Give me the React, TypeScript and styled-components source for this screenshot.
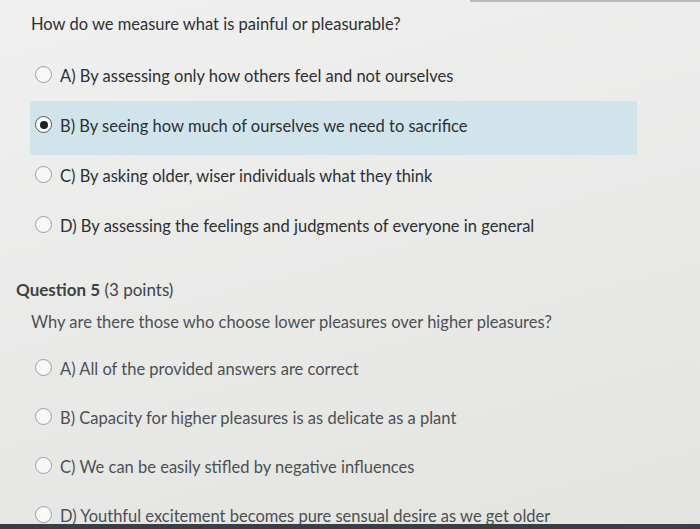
import styled, { createGlobalStyle } from "styled-components";

const colors = {
  bg: "#eaebe9",
  text: "#2c2f33",
  muted: "#4c5053",
  ring: "#9b9ea0",
  highlight: "#d2e4eb",
  bar: "#3b3e44",
};

const GlobalStyle = createGlobalStyle`
  html, body {
    margin: 0;
    padding: 0;
  }
  body {
    font-family: Lato, "Open Sans", "Liberation Sans", sans-serif;
    background: ${colors.bg};
  }
`;

const Page = styled.div`
  width: 700px;
  height: 529px;
  display: flex;
  flex-direction: column;
  overflow: hidden;
  background: linear-gradient(165deg, #eff0ef 0%, #e9eae8 55%, #e3e4df 100%);
`;

const Content = styled.div`
  flex: 1;
  overflow: hidden;
  border-top: 2px solid transparent;
`;

const TopEdge = styled.div`
  height: 2px;
  margin-left: 470px;
  background: #b9bbbc;
`;

const Section = styled.section<{ $tone?: string }>`
  color: ${(p) => p.$tone || colors.text};
`;

const Prompt = styled.p<{ $top?: number }>`
  margin: ${(p) => p.$top ?? 10}px 0 0 31px;
  font-size: 16.5px;
  line-height: 20px;
`;

const Heading = styled.h3`
  margin: 29px 0 0 16px;
  font-size: 17px;
  line-height: 20px;
  font-weight: 400;
  color: #3e4245;

  strong {
    font-weight: 700;
  }
`;

const OptionList = styled.div<{ $top: number }>`
  margin-top: ${(p) => p.$top}px;
  display: flex;
  flex-direction: column;
`;

const Option = styled.label<{ $selected?: boolean; $row?: number }>`
  display: flex;
  align-items: center;
  gap: 8px;
  height: ${(p) => (p.$row ?? 50) + (p.$selected ? 4 : 0)}px;
  margin-bottom: ${(p) => (p.$selected ? -4 : 0)}px;
  padding-bottom: ${(p) => (p.$selected ? 4 : 0)}px;
  width: 607px;
  margin-left: 30px;
  padding-left: 5px;
  box-sizing: border-box;
  font-size: 16.5px;
  background: ${(p) => (p.$selected ? colors.highlight : "transparent")};
`;

const Radio = styled.span<{ $checked?: boolean }>`
  width: 17px;
  height: 17px;
  margin-top: -3px;
  box-sizing: border-box;
  border-radius: 50%;
  border: 1.5px solid ${(p) => (p.$checked ? "#55595c" : colors.ring)};
  background: #f7f8f7;
  display: flex;
  align-items: center;
  justify-content: center;
  flex-shrink: 0;

  &::after {
    content: "";
    width: 8px;
    height: 8px;
    border-radius: 50%;
    background: #1f2124;
    display: ${(p) => (p.$checked ? "block" : "none")};
  }
`;

const BottomBar = styled.div`
  height: 5px;
  background: ${colors.bar};
`;

const first = [
  "A) By assessing only how others feel and not ourselves",
  "B) By seeing how much of ourselves we need to sacrifice",
  "C) By asking older, wiser individuals what they think",
  "D) By assessing the feelings and judgments of everyone in general",
];

const second = [
  "A) All of the provided answers are correct",
  "B) Capacity for higher pleasures is as delicate as a plant",
  "C) We can be easily stifled by negative influences",
  "D) Youthful excitement becomes pure sensual desire as we get older",
];

export default function App() {
  return (
    <>
      <GlobalStyle />
      <Page>
        <TopEdge />
        <Content>
          <Section>
            <Prompt>How do we measure what is painful or pleasurable?</Prompt>
            <OptionList $top={17}>
              {first.map((o, i) => (
                <Option key={o} $selected={i === 1}>
                  <Radio $checked={i === 1} />
                  {o}
                </Option>
              ))}
            </OptionList>
          </Section>
          <Section $tone={colors.muted}>
            <Heading>
              <strong>Question 5</strong> (3 points)
            </Heading>
            <Prompt $top={12}>
              Why are there those who choose lower pleasures over higher pleasures?
            </Prompt>
            <OptionList $top={12}>
              {second.map((o) => (
                <Option key={o} $row={49}>
                  <Radio />
                  {o}
                </Option>
              ))}
            </OptionList>
          </Section>
        </Content>
        <BottomBar />
      </Page>
    </>
  );
}
